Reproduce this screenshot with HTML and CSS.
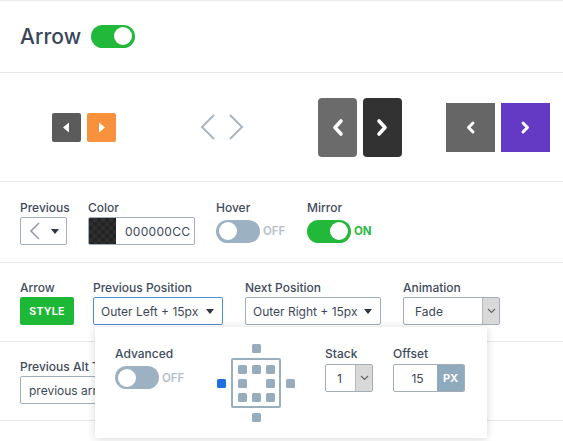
FILE: index.html
```html
<!DOCTYPE html>
<html>
<head>
<meta charset="utf-8">
<link rel="stylesheet" href="styles.css">
</head>
<body>
<div class="panel">
  <header class="head">
    <h1 class="title">Arrow</h1>
    <span class="switch on"><span class="knob"></span></span>
  </header>

  <section class="previews">
    <div class="pv">
      <span class="sq sq-dark"><svg width="29" height="29" viewBox="0 0 29 29"><path d="M17 9.5 L11 14.5 L17 19.5 Z" fill="#fff"/></svg></span>
      <span class="sq sq-orange"><svg width="29" height="29" viewBox="0 0 29 29"><path d="M12 9.5 L18 14.5 L12 19.5 Z" fill="#fff"/></svg></span>
    </div>
    <div class="pv">
      <svg width="46" height="26" viewBox="0 0 46 26"><path d="M15 1 L3 13 L15 25" fill="none" stroke="#a9b6c0" stroke-width="2"/><path d="M31 1 L43 13 L31 25" fill="none" stroke="#a9b6c0" stroke-width="2"/></svg>
    </div>
    <div class="pv pv-tall">
      <span class="tall tall-grey"><svg width="39" height="59" viewBox="0 0 39 59"><path d="M23 23 L17 29.5 L23 36" fill="none" stroke="#fff" stroke-width="3.6" stroke-linecap="round" stroke-linejoin="round"/></svg></span>
      <span class="tall tall-dark"><svg width="39" height="59" viewBox="0 0 39 59"><path d="M16 23 L22 29.5 L16 36" fill="none" stroke="#fff" stroke-width="3.6" stroke-linecap="round" stroke-linejoin="round"/></svg></span>
    </div>
    <div class="pv">
      <span class="big big-grey"><svg width="49" height="49" viewBox="0 0 49 49"><path d="M27 20 L22.5 24.5 L27 29" fill="none" stroke="#fff" stroke-width="3" stroke-linecap="round" stroke-linejoin="round"/></svg></span>
      <span class="big big-purple"><svg width="49" height="49" viewBox="0 0 49 49"><path d="M22 20 L26.5 24.5 L22 29" fill="none" stroke="#fff" stroke-width="3" stroke-linecap="round" stroke-linejoin="round"/></svg></span>
    </div>
  </section>

  <section class="row row-a">
    <div class="fld w-f1">
      <label class="lbl">Previous</label>
      <div class="box sel-prev">
        <svg width="12" height="18" viewBox="0 0 12 18"><path d="M10 1 L2 9 L10 17" fill="none" stroke="#8f9ca6" stroke-width="1.6"/></svg>
        <span class="caret"></span>
      </div>
    </div>
    <div class="fld">
      <label class="lbl">Color</label>
      <div class="box color">
        <span class="swatch"></span>
        <span class="ctext">000000CC</span>
      </div>
    </div>
    <div class="fld fld-hover">
      <label class="lbl">Hover</label>
      <div class="tg">
        <span class="switch off"><span class="knob"></span></span>
        <span class="tg-off">OFF</span>
      </div>
    </div>
    <div class="fld">
      <label class="lbl">Mirror</label>
      <div class="tg">
        <span class="switch on"><span class="knob"></span></span>
        <span class="tg-on">ON</span>
      </div>
    </div>
  </section>

  <section class="row row-b">
    <div class="fld">
      <label class="lbl">Arrow</label>
      <button class="style-btn">STYLE</button>
    </div>
    <div class="fld">
      <label class="lbl">Previous Position</label>
      <div class="box sel sel-focus w-prev"><span>Outer Left + 15px</span><span class="caret"></span></div>
    </div>
    <div class="fld">
      <label class="lbl">Next Position</label>
      <div class="box sel w-next"><span>Outer Right + 15px</span><span class="caret"></span></div>
    </div>
    <div class="fld">
      <label class="lbl">Animation</label>
      <div class="box nsel w-anim">
        <span class="nsel-val">Fade</span>
        <span class="nsel-btn"><svg width="9" height="6" viewBox="0 0 9 6"><path d="M1 1 L4.5 4.5 L8 1" fill="none" stroke="#666" stroke-width="1.1"/></svg></span>
      </div>
    </div>
  </section>

  <section class="row row-c">
    <div class="fld">
      <label class="lbl">Previous Alt Text</label>
      <div class="box inp w-alt">previous arrow</div>
    </div>
  </section>

  <div class="popup">
    <div class="pfld adv">
      <label class="lbl">Advanced</label>
      <div class="tg tg-adv">
        <span class="switch off"><span class="knob"></span></span>
        <span class="tg-off">OFF</span>
      </div>
    </div>
    <div class="posgrid">
      <span class="ps ps-top"></span>
      <span class="ps ps-left"></span>
      <div class="pbox">
        <span class="ps"></span><span class="ps"></span><span class="ps"></span>
        <span class="ps"></span><span class="ps ps-empty"></span><span class="ps"></span>
        <span class="ps"></span><span class="ps"></span><span class="ps"></span>
      </div>
      <span class="ps ps-right"></span>
      <span class="ps ps-bottom"></span>
    </div>
    <div class="pfld stack">
      <label class="lbl">Stack</label>
      <div class="box nsel w-stack">
        <span class="nsel-val">1</span>
        <span class="nsel-btn"><svg width="9" height="6" viewBox="0 0 9 6"><path d="M1 1 L4.5 4.5 L8 1" fill="none" stroke="#666" stroke-width="1.1"/></svg></span>
      </div>
    </div>
    <div class="pfld offset">
      <label class="lbl">Offset</label>
      <div class="box unit w-off">
        <span class="unit-val">15</span>
        <span class="unit-px">PX</span>
      </div>
    </div>
  </div>
</div>
</body>
</html>
```

FILE: styles.css
```css
* { box-sizing: border-box; }
html, body { margin: 0; padding: 0; background: #fff; }
body {
  font-family: Inter, "Noto Sans", "Liberation Sans", sans-serif;
  color: #3c4858;
}
.panel {
  position: relative;
  width: 563px;
  height: 441px;
  overflow: hidden;
  border-top: 1px solid #ededed;
}

/* header */
.head {
  height: 72px;
  display: flex;
  align-items: center;
  padding-left: 20px;
  padding-bottom: 1px;
  border-bottom: 1px solid #e7e7e7;
}
.title {
  margin: 0;
  font-size: 21px;
  font-weight: 500;
  color: #394558;
  letter-spacing: 0.1px;
}
.head .switch { margin-left: 10px; }

/* switch */
.switch {
  position: relative;
  display: inline-block;
  width: 44px;
  height: 23px;
  border-radius: 12px;
  flex: none;
}
.switch.on { background: #22b83a; }
.switch.off { background: #9cb2c2; }
.switch .knob {
  position: absolute;
  top: 2.5px;
  width: 18px;
  height: 18px;
  border-radius: 50%;
  background: #fff;
}
.switch.on .knob { right: 3px; }
.switch.off .knob { left: 3px; }

/* previews */
.previews {
  height: 109px;
  display: grid;
  grid-template-columns: repeat(4, 138px);
  align-items: center;
  padding-left: 15px;
  border-bottom: 1px solid #e7e7e7;
  overflow: hidden;
}
.pv {
  display: flex;
  justify-content: center;
  align-items: center;
  gap: 6px;
}
.sq, .tall, .big { display: block; line-height: 0; }
.sq { width: 29px; height: 29px; border-radius: 2px; }
.sq-dark { background: #5b5b5b; }
.sq-orange { background: #f7913b; }
.tall { width: 39px; height: 59px; border-radius: 4px; }
.tall-grey { background: #6b6b6b; }
.tall-dark { background: #323232; }
.big { width: 49px; height: 49px; }
.big-grey { background: #666666; }
.big-purple { background: #6439c4; }

/* rows */
.row {
  display: flex;
  align-items: flex-start;
  padding-left: 20px;
  border-bottom: 1px solid #e7e7e7;
}
.row-a { height: 81px; padding-top: 18px; }
.row-b { height: 79px; padding-top: 17px; }
.row-c { height: 79px; padding-top: 17px; }
.fld { display: flex; flex-direction: column; }
.lbl {
  display: block;
  font-size: 12px;
  line-height: 15px;
  font-weight: 500;
  color: #3f4b5c;
  margin-bottom: 2px;
  white-space: nowrap;
}
.box {
  height: 28px;
  border: 1.5px solid #9fb0bc;
  border-radius: 2px;
  background: #fff;
  display: flex;
  align-items: center;
  font-size: 12px;
  color: #3c4858;
  white-space: nowrap;
}
.w-f1 { width: 47px; }
.row-a .fld:nth-child(2) { margin-left: 21px; }
.row-a .fld:nth-child(3) { margin-left: 21px; }
.row-a .fld:nth-child(4) { margin-left: 21px; }
.sel-prev {
  width: 47px;
  padding: 0 7px 0 8px;
  justify-content: space-between;
}
.caret {
  width: 0; height: 0;
  border-left: 4px solid transparent;
  border-right: 4px solid transparent;
  border-top: 5px solid #2f3640;
}
.color { width: 107px; padding: 0; overflow: hidden; }
.swatch {
  width: 27px;
  height: 100%;
  background: repeating-conic-gradient(#2f2f2f 0 25%, #242424 0 50%) 0 0 / 8px 8px;
  flex: none;
}
.ctext { margin-left: 9px; letter-spacing: 0.3px; }
.fld-hover { width: 70px; }
.tg { display: flex; align-items: center; height: 28px; }
.tg-off { font-size: 11.5px; font-weight: 600; color: #b3c0ca; margin-left: 3px; }
.tg-on { font-size: 11.5px; font-weight: 700; color: #2fb845; margin-left: 3px; }

.style-btn {
  width: 54px;
  height: 28px;
  border: none;
  border-radius: 2px;
  background: #1db936;
  color: #fff;
  font-family: inherit;
  font-size: 10.5px;
  font-weight: 700;
  letter-spacing: 0.3px;
  padding: 0;
}
.row-b .fld:nth-child(2) { margin-left: 19px; }
.row-b .fld:nth-child(3) { margin-left: 22px; }
.row-b .fld:nth-child(4) { margin-left: 22px; }
.sel { padding: 0 8px 0 7px; justify-content: space-between; }
.sel-focus { border-color: #4b8ed6; }
.w-prev { width: 130px; }
.w-next { width: 136px; }
.w-anim { width: 97px; }
.nsel { padding: 0; overflow: hidden; justify-content: space-between; }
.nsel-val { padding-left: 11px; }
.nsel-btn {
  width: 17px;
  height: 100%;
  background: #d9d9d9;
  border-left: 1px solid #b9b9b9;
  display: flex;
  align-items: center;
  justify-content: center;
}
.inp { padding-left: 8px; }
.w-alt { width: 270px; }

/* popup */
.popup {
  position: absolute;
  left: 95px;
  top: 326px;
  width: 392px;
  height: 111px;
  background: #fff;
  box-shadow: 0 1px 8px rgba(0, 0, 0, 0.16);
  border-radius: 2px;
  display: flex;
  align-items: flex-start;
  padding: 19px 0 0 20px;
}
.pfld { display: flex; flex-direction: column; }
.pfld .lbl { margin-bottom: 3px; }
.adv { width: 72px; }
.tg-adv { height: 23px; margin-top: 2px; }
.posgrid {
  margin-left: 30px;
  margin-top: -2px;
  display: grid;
  grid-template-columns: 9px 50px 9px;
  grid-template-rows: 9px 50px 9px;
  gap: 5px;
}
.ps {
  width: 9px;
  height: 9px;
  background: #97acbc;
  border-radius: 1.5px;
}
.ps-top { grid-column: 2; grid-row: 1; justify-self: center; }
.ps-left { grid-column: 1; grid-row: 2; align-self: center; background: #1f6fde; }
.ps-right { grid-column: 3; grid-row: 2; align-self: center; }
.ps-bottom { grid-column: 2; grid-row: 3; justify-self: center; }
.ps-empty { background: transparent; }
.pbox {
  grid-column: 2;
  grid-row: 2;
  border: 2.5px solid #9aafbe;
  border-radius: 2px;
  display: grid;
  grid-template-columns: repeat(3, 9px);
  grid-template-rows: repeat(3, 9px);
  gap: 5px;
  justify-content: center;
  align-content: center;
}
.stack { margin-left: 30px; }
.w-stack { width: 48px; border-color: #a3adb5; }
.w-stack .nsel-val { padding-left: 11px; }
.offset { margin-left: 20px; }
.w-off { width: 72px; padding: 0; overflow: hidden; border-color: #a3adb5; }
.unit-val { flex: 1; text-align: center; padding-left: 4px; }
.unit-px {
  width: 27px;
  height: 100%;
  background: #8faabc;
  color: #fff;
  font-size: 11px;
  font-weight: 700;
  display: flex;
  align-items: center;
  justify-content: center;
}
```
